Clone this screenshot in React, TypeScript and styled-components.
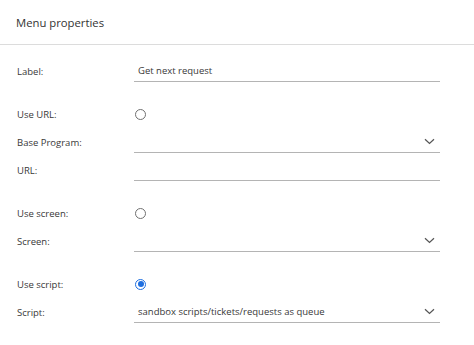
import styled, { createGlobalStyle } from "styled-components";

const GlobalStyle = createGlobalStyle`
  body {
    margin: 0;
    background: #fff;
    font-family: "Open Sans", "Noto Sans", sans-serif;
    color: #333;
  }
`;

const Panel = styled.div`
  width: 474px;
  height: 345px;
  background: #fff;
`;

const Header = styled.div`
  height: 44px;
  display: flex;
  align-items: center;
  padding-left: 16px;
  border-bottom: 1px solid #dcdcdc;
  font-size: 11.3px;
  color: #333;
`;

const Form = styled.div`
  padding: 12px 0 0 17px;
`;

const Group = styled.div`
  & + & {
    margin-top: 15px;
  }
`;

const Row = styled.div`
  display: grid;
  grid-template-columns: 117px 306px;
  align-items: center;
  height: 28px;
`;

const Label = styled.span`
  font-size: 9.5px;
  color: #383838;
`;

const Field = styled.div`
  height: 22px;
  display: flex;
  align-items: center;
  justify-content: space-between;
  padding: 0 4px;
  border-bottom: 1px solid #b4b4b4;
  box-sizing: border-box;
  font-size: 9.5px;
  color: #383838;
`;

const Radio = styled.span<{ $checked?: boolean }>`
  width: 11px;
  height: 11px;
  margin-left: 1px;
  border-radius: 50%;
  box-sizing: border-box;
  border: 1px solid ${(p) => (p.$checked ? "#1f6fe0" : "#707070")};
  display: flex;
  align-items: center;
  justify-content: center;

  &::after {
    content: "";
    display: ${(p) => (p.$checked ? "block" : "none")};
    width: 6px;
    height: 6px;
    border-radius: 50%;
    background: #1f6fe0;
  }
`;

const Chevron = () => (
  <svg width="11" height="7" viewBox="0 0 11 7" style={{ marginRight: 1 }}>
    <path d="M1 1.2 L5.5 5.5 L10 1.2" fill="none" stroke="#555" strokeWidth="1.2" />
  </svg>
);

const Select = ({ value }: { value?: string }) => (
  <Field>
    <span>{value}</span>
    <Chevron />
  </Field>
);

export default function App() {
  return (
    <Panel>
      <GlobalStyle />
      <Header>Menu properties</Header>
      <Form>
        <Group>
          <Row>
            <Label>Label:</Label>
            <Field>Get next request</Field>
          </Row>
        </Group>
        <Group>
          <Row>
            <Label>Use URL:</Label>
            <Radio />
          </Row>
          <Row>
            <Label>Base Program:</Label>
            <Select />
          </Row>
          <Row>
            <Label>URL:</Label>
            <Field />
          </Row>
        </Group>
        <Group>
          <Row>
            <Label>Use screen:</Label>
            <Radio />
          </Row>
          <Row>
            <Label>Screen:</Label>
            <Select />
          </Row>
        </Group>
        <Group>
          <Row>
            <Label>Use script:</Label>
            <Radio $checked />
          </Row>
          <Row>
            <Label>Script:</Label>
            <Select value="sandbox scripts/tickets/requests as queue" />
          </Row>
        </Group>
      </Form>
    </Panel>
  );
}
